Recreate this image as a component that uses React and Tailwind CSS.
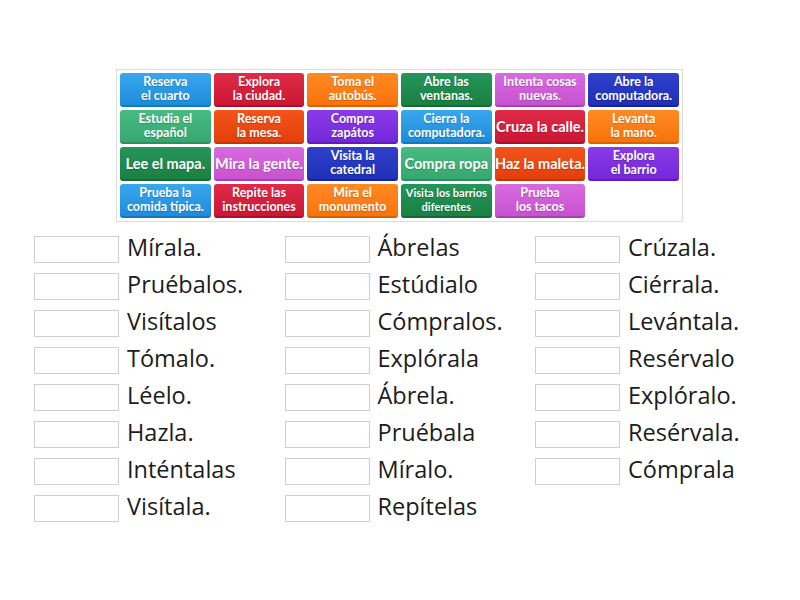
import React from "react";

const C = {
  blue: "bg-linear-to-b from-[#3aa6ee] to-[#1c8cdb] border-b-2 border-[#1577c0]",
  red: "bg-linear-to-b from-[#e02a47] to-[#cc1634] border-b-2 border-[#a8102a]",
  orange: "bg-linear-to-b from-[#ff8a22] to-[#f97308] border-b-2 border-[#d86200]",
  green: "bg-linear-to-b from-[#25955a] to-[#1a8043] border-b-2 border-[#136a36]",
  pink: "bg-linear-to-b from-[#d86ae0] to-[#c852d0] border-b-2 border-[#a93fb2]",
  dblue: "bg-linear-to-b from-[#2f41cc] to-[#1f2fb8] border-b-2 border-[#18259a]",
  lgreen: "bg-linear-to-b from-[#47bb83] to-[#36a86f] border-b-2 border-[#2a915d]",
  ored: "bg-linear-to-b from-[#f2541a] to-[#e33f0a] border-b-2 border-[#c03408]",
  purple: "bg-linear-to-b from-[#8a3ae8] to-[#7528da] border-b-2 border-[#5f1cba]",
};

const tiles = [
  ["blue", ["Reserva", "el cuarto"]],
  ["red", ["Explora", "la ciudad."]],
  ["orange", ["Toma el", "autobús."]],
  ["green", ["Abre las", "ventanas."]],
  ["pink", ["Intenta cosas", "nuevas."]],
  ["dblue", ["Abre la", "computadora."]],
  ["lgreen", ["Estudia el", "español"]],
  ["ored", ["Reserva", "la mesa."]],
  ["purple", ["Compra", "zapátos"]],
  ["blue", ["Cierra la", "computadora."]],
  ["red", ["Cruza la calle."], "big"],
  ["orange", ["Levanta", "la mano."]],
  ["green", ["Lee el mapa."], "big"],
  ["pink", ["Mira la gente."], "big"],
  ["dblue", ["Visita la", "catedral"]],
  ["lgreen", ["Compra ropa"], "big"],
  ["ored", ["Haz la maleta."], "big"],
  ["purple", ["Explora", "el barrio"]],
  ["blue", ["Prueba la", "comida típica."]],
  ["red", ["Repite las", "instrucciones"]],
  ["orange", ["Mira el", "monumento"]],
  ["green", ["Visita los barrios", "diferentes"], "small"],
  ["pink", ["Prueba", "los tacos"]],
];

const cols = [
  ["Mírala.", "Pruébalos.", "Visítalos", "Tómalo.", "Léelo.", "Hazla.", "Inténtalas", "Visítala."],
  ["Ábrelas", "Estúdialo", "Cómpralos.", "Explórala", "Ábrela.", "Pruébala", "Míralo.", "Repítelas"],
  ["Crúzala.", "Ciérrala.", "Levántala.", "Resérvalo", "Explóralo.", "Resérvala.", "Cómprala"],
];

function Tile({ color, lines, size }) {
  const textCls =
    size === "big"
      ? "text-[14.5px] leading-[17px]"
      : size === "small"
      ? "text-[11px] leading-[14px]"
      : "text-[12.5px] leading-[14px]";
  return (
    <div
      className={`${C[color]} rounded-[3px] flex flex-col items-center justify-center text-white font-bold text-center overflow-hidden whitespace-nowrap [text-shadow:0_1px_1px_rgba(0,0,0,0.2)] ${textCls}`}
      style={{ fontFamily: "Lato, 'Open Sans', sans-serif" }}
    >
      {lines.map((l, i) => (
        <span key={i}>{l}</span>
      ))}
    </div>
  );
}

export default function App() {
  return (
    <div
      className="w-[800px] h-[600px] bg-white overflow-hidden"
      style={{ fontFamily: "'Open Sans', 'Noto Sans', sans-serif" }}
    >
      <div className="pt-[69px] pl-[116px]">
        <div className="w-[567px] h-[153px] border border-[#dcdcdc] p-[3px] grid grid-cols-6 grid-rows-4 gap-[3px]">
          {tiles.map(([c, l, s], i) => (
            <Tile key={i} color={c} lines={l} size={s} />
          ))}
        </div>
      </div>
      <div className="mt-[14px] pl-[34px] flex">
        {cols.map((col, ci) => (
          <div key={ci} className="w-[250.5px] flex flex-col gap-[10px]">
            {col.map((t, i) => (
              <div key={i} className="flex items-center h-[27px]">
                <div className="w-[85px] h-[27px] border border-[#cfcfcf] bg-white shrink-0" />
                <span
                  className="ml-[8px] pb-[3px] text-[23.5px] text-[#1c1c1c] leading-none"
                  style={{ fontFamily: "'Open Sans', sans-serif" }}
                >
                  {t}
                </span>
              </div>
            ))}
          </div>
        ))}
      </div>
    </div>
  );
}
